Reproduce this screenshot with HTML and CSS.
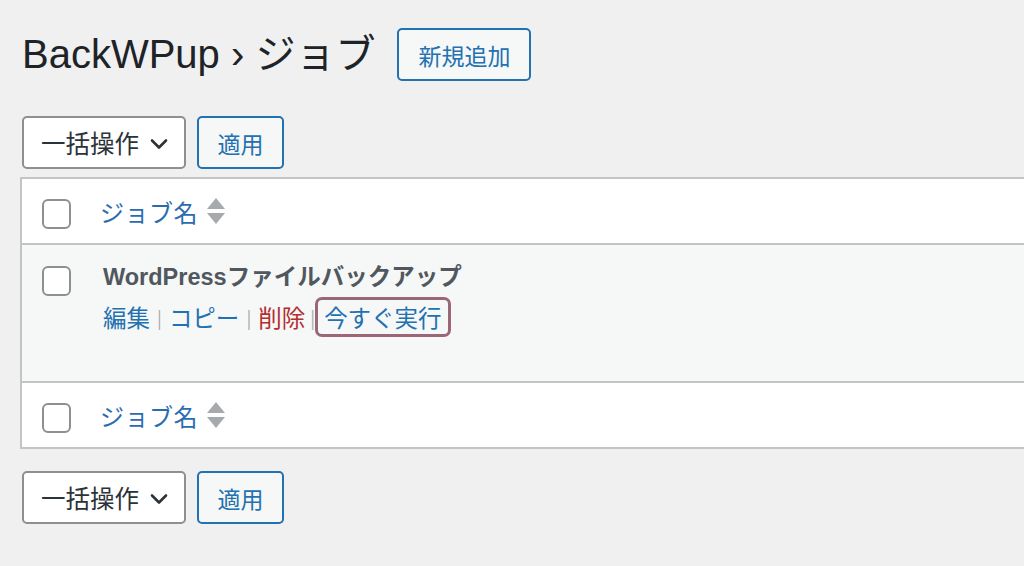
FILE: index.html
```html
<!DOCTYPE html>
<html lang="ja">
<head>
<meta charset="utf-8">
<title>BackWPup › ジョブ</title>
<link rel="stylesheet" href="styles.css">
</head>
<body>
<div class="wrap">
  <div class="page-head">
    <h1 class="page-title">BackWPup › ジョブ</h1>
    <a class="btn btn-add" href="#">新規追加</a>
  </div>

  <div class="tablenav">
    <div class="select">一括操作
      <svg class="chev" viewBox="0 0 20 12" width="20" height="12"><path d="M3 2.5 L10 9.5 L17 2.5" fill="none" stroke="#2c3338" stroke-width="2.6" stroke-linecap="round" stroke-linejoin="round"/></svg>
    </div>
    <a class="btn btn-apply" href="#">適用</a>
  </div>

  <div class="list">
    <div class="row row-head">
      <div class="cb-cell"><span class="cb"></span></div>
      <div class="name-cell">
        <a class="sort-link" href="#">ジョブ名
          <svg class="sort" viewBox="0 0 20 30" width="20" height="30"><path d="M10 2 L19 13 L1 13 Z" fill="#a7aaad"/><path d="M1 17 L19 17 L10 28 Z" fill="#a7aaad"/></svg>
        </a>
      </div>
    </div>

    <div class="row row-body">
      <div class="cb-cell"><span class="cb"></span></div>
      <div class="name-cell">
        <div class="job-title">WordPressファイルバックアップ</div>
        <div class="actions">
          <a href="#">編集</a><span class="sep">|</span><a href="#">コピー</a><span class="sep">|</span><a class="del" href="#">削除</a><span class="sep sep-last">|</span><a class="run" href="#">今すぐ実行</a>
        </div>
      </div>
    </div>

    <div class="row row-head">
      <div class="cb-cell"><span class="cb"></span></div>
      <div class="name-cell">
        <a class="sort-link" href="#">ジョブ名
          <svg class="sort" viewBox="0 0 20 30" width="20" height="30"><path d="M10 2 L19 13 L1 13 Z" fill="#a7aaad"/><path d="M1 17 L19 17 L10 28 Z" fill="#a7aaad"/></svg>
        </a>
      </div>
    </div>
  </div>

  <div class="tablenav tablenav-bottom">
    <div class="select">一括操作
      <svg class="chev" viewBox="0 0 20 12" width="20" height="12"><path d="M3 2.5 L10 9.5 L17 2.5" fill="none" stroke="#2c3338" stroke-width="2.6" stroke-linecap="round" stroke-linejoin="round"/></svg>
    </div>
    <a class="btn btn-apply" href="#">適用</a>
  </div>
</div>
</body>
</html>
```

FILE: styles.css
```css
html, body {
  margin: 0;
  padding: 0;
  background: #f0f0f1;
  overflow: hidden;
}
body {
  font-family: "Liberation Sans", "Noto Sans CJK JP", sans-serif;
  color: #3c434a;
  width: 1024px;
  height: 566px;
}
a { text-decoration: none; }

.wrap {
  padding-left: 20px;
}

.page-head {
  display: flex;
  align-items: center;
  height: 53px;
  margin-top: 28px;
  padding-left: 2px;
}
.page-title {
  margin: 0;
  font-size: 40px;
  font-weight: 400;
  color: #1d2327;
  line-height: 53px;
}

.btn {
  box-sizing: border-box;
  display: inline-flex;
  align-items: center;
  justify-content: center;
  height: 53px;
  border: 2px solid #2271b1;
  border-radius: 5px;
  background: #f6f7f7;
  color: #2271b1;
  font-family: "Noto Sans CJK JP", sans-serif;
  font-size: 23px;
}
.btn-add {
  width: 134px;
  margin-left: 22px;
}

.tablenav {
  display: flex;
  align-items: center;
  gap: 11px;
  margin-top: 35px;
  padding-left: 2px;
  height: 53px;
}
.tablenav-bottom {
  margin-top: 22px;
}
.select {
  box-sizing: border-box;
  width: 164px;
  height: 53px;
  display: flex;
  align-items: center;
  padding-left: 17px;
  gap: 10px;
  border: 2px solid #8c8f94;
  border-radius: 5px;
  background: #fff;
  color: #2c3338;
  font-family: "Noto Sans CJK JP", sans-serif;
  font-size: 24.5px;
}
.chev { display: block; margin-top: 2px; }
.btn-apply {
  width: 87px;
}

.list {
  margin-top: 8px;
  width: 1100px;
  border: 2px solid #c3c4c7;
  border-bottom: 0;
  background: #fff;
}
.row {
  display: grid;
  grid-template-columns: 80px 1fr;
  border-bottom: 2px solid #c3c4c7;
}
.row-head {
  height: 64px;
  align-items: center;
  background: #fff;
}
.row-body {
  height: 136px;
  align-items: start;
  background: #f6f7f7;
}
.cb-cell {
  padding-left: 20px;
  display: flex;
}
.row-head .cb-cell { padding-top: 6px; }
.row-body .cb-cell { padding-top: 21px; }
.cb {
  box-sizing: border-box;
  display: block;
  width: 29px;
  height: 30px;
  border: 2px solid #8c8f94;
  border-radius: 6px;
  background: #fff;
}

.sort-link {
  display: inline-flex;
  align-items: center;
  gap: 8px;
  color: #2b6cb0;
  font-family: "Noto Sans CJK JP", sans-serif;
  font-size: 24px;
  letter-spacing: 0.5px;
  margin-left: -2px;
}
.sort { display: block; }

.name-cell { min-width: 0; }
.row-body .name-cell { padding-top: 15px; padding-left: 1px; }
.job-title {
  font-weight: 700;
  font-size: 23.5px;
  line-height: 34px;
  color: #50575e;
}
.actions {
  display: flex;
  align-items: center;
  margin-top: 3px;
  font-family: "Noto Sans CJK JP", sans-serif;
  font-size: 23.5px;
  line-height: 32px;
}
.actions a { color: #2271b1; }
.actions .del { color: #b32d2e; }
.sep {
  color: #a7aaad;
  font-size: 18px;
  margin: 0 7px;
}
.sep-last { margin: 0 1px 0 5px; }
.run {
  border: 3px solid #9a6678;
  border-radius: 7px;
  padding: 0 6px;
  margin-left: -1px;
  line-height: 34px;
}
```
